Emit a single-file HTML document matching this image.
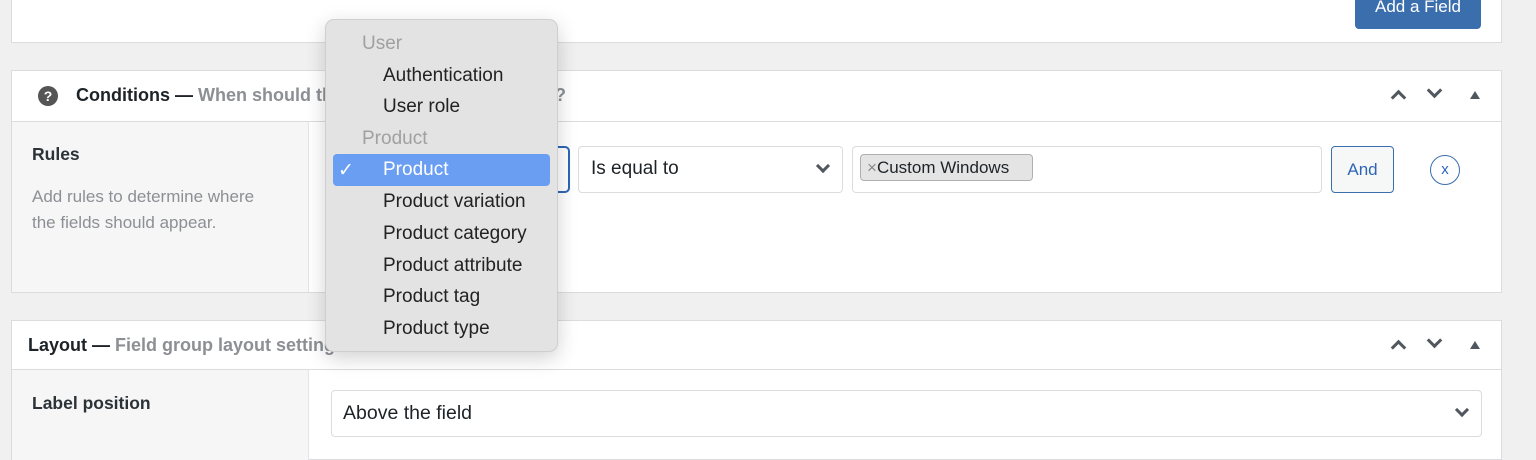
<!DOCTYPE html>
<html><head><style>
*{box-sizing:border-box;margin:0;padding:0}
body{width:1536px;height:451px;overflow:hidden;background:#f0f0f0;font-family:"Liberation Sans",sans-serif;position:relative;color:#1d2327}
.a{position:absolute}
.box{background:#fff;border:1px solid #dcdcde}
.chev{position:absolute;width:11px;height:11px;border-right:3px solid #50575e;border-bottom:3px solid #50575e}
.item{position:absolute;left:57px;font-size:19px;color:#222}
</style></head><body>
<div class="a box" style="left:11px;top:-2px;width:1491px;height:45px"></div>
<div class="a" style="left:1355px;top:-4px;width:126px;height:33px;background:#3a6ead;border-radius:4px;color:#fff;font-size:17px;text-align:center;line-height:22px">Add a Field</div>

<div class="a box" style="left:11px;top:70px;width:1491px;height:223px"></div>
<div class="a" style="left:12px;top:121px;width:1489px;height:1px;background:#dcdcde"></div>
<div class="a" style="left:12px;top:122px;width:297px;height:170px;background:#f6f6f6;border-right:1px solid #e5e5e5"></div>
<div class="a" style="left:38px;top:86px;width:20px;height:20px;border-radius:50%;background:#555;color:#fff;font-size:14px;font-weight:bold;text-align:center;line-height:20px">?</div>
<div class="a" style="left:76px;top:85px;font-size:18px;font-weight:bold">Conditions — <span style="color:#8c8f94">When should the field group be displayed?</span></div>
<div class="chev" style="left:1393px;top:92px;transform:rotate(-135deg)"></div>
<div class="chev" style="left:1429px;top:85px;transform:rotate(45deg)"></div>
<div class="a" style="left:1470px;top:91px;width:0;height:0;border-left:5px solid transparent;border-right:5px solid transparent;border-bottom:8px solid #50575e"></div>
<div class="a" style="left:32px;top:144px;font-size:17.5px;font-weight:bold;color:#2c3338">Rules</div>
<div class="a" style="left:32px;top:184px;font-size:17px;color:#8c8f94;line-height:26px">Add rules to determine where<br>the fields should appear.</div>

<div class="a" style="left:450px;top:146px;width:120px;height:47px;border:2px solid #2e66b5;border-radius:5px;background:#fff"></div>
<div class="a" style="left:578px;top:146px;width:265px;height:47px;border:1px solid #dcdcde;border-radius:4px;background:#fff"></div>
<div class="a" style="left:591px;top:158px;font-size:19px">Is equal to</div>
<div class="chev" style="left:818px;top:161px;width:10px;height:10px;transform:rotate(45deg)"></div>
<div class="a" style="left:852px;top:146px;width:470px;height:47px;border:1px solid #dcdcde;border-radius:4px;background:#fff"></div>
<div class="a" style="left:860px;top:154px;width:173px;height:27px;border:1px solid #b0b0b0;border-radius:4px;background:#e4e4e4;font-size:17px;line-height:25px;padding-left:6px"><span style="color:#888">×</span>Custom Windows</div>
<div class="a" style="left:1331px;top:146px;width:63px;height:47px;border:1px solid #3a6ead;border-radius:4px;background:#f6f7f7;color:#2e66b5;font-size:17px;text-align:center;line-height:45px">And</div>
<div class="a" style="left:1430px;top:155px;width:30px;height:30px;border:1px solid #3a6ead;border-radius:50%;color:#2e66b5;font-size:15px;text-align:center;line-height:27px">x</div>

<div class="a box" style="left:11px;top:320px;width:1491px;height:140px"></div>
<div class="a" style="left:12px;top:369px;width:1489px;height:1px;background:#dcdcde"></div>
<div class="a" style="left:12px;top:370px;width:297px;height:90px;background:#f6f6f6;border-right:1px solid #e5e5e5"></div>
<div class="a" style="left:28px;top:335px;font-size:18px;font-weight:bold">Layout — <span style="color:#8c8f94">Field group layout settings</span></div>
<div class="chev" style="left:1393px;top:342px;transform:rotate(-135deg)"></div>
<div class="chev" style="left:1429px;top:335px;transform:rotate(45deg)"></div>
<div class="a" style="left:1470px;top:341px;width:0;height:0;border-left:5px solid transparent;border-right:5px solid transparent;border-bottom:8px solid #50575e"></div>
<div class="a" style="left:32px;top:393px;font-size:17.5px;font-weight:bold;color:#2c3338">Label position</div>
<div class="a" style="left:331px;top:390px;width:1151px;height:47px;border:1px solid #dcdcde;border-radius:4px;background:#fff"></div>
<div class="a" style="left:343px;top:402px;font-size:19.5px">Above the field</div>
<div class="chev" style="left:1457px;top:405px;width:10px;height:10px;transform:rotate(45deg)"></div>

<div class="a" style="left:325px;top:19px;width:233px;height:333px;background:#e3e3e3;border:1px solid #cfcfcf;border-radius:9px;box-shadow:0 6px 20px rgba(0,0,0,.18)">
<div class="item" style="left:36px;top:13px;color:#a0a0a0">User</div>
<div class="item" style="top:45px">Authentication</div>
<div class="item" style="top:76px">User role</div>
<div class="item" style="left:36px;top:108px;color:#a0a0a0">Product</div>
<div class="a" style="left:7px;top:134px;width:217px;height:32px;background:#6a9ef3;border-radius:4px"></div>
<div class="item" style="left:12px;top:139px;color:#fff">✓</div>
<div class="item" style="top:139px;color:#fff">Product</div>
<div class="item" style="top:171px">Product variation</div>
<div class="item" style="top:203px">Product category</div>
<div class="item" style="top:235px">Product attribute</div>
<div class="item" style="top:266px">Product tag</div>
<div class="item" style="top:298px">Product type</div>
</div>
</body></html>
